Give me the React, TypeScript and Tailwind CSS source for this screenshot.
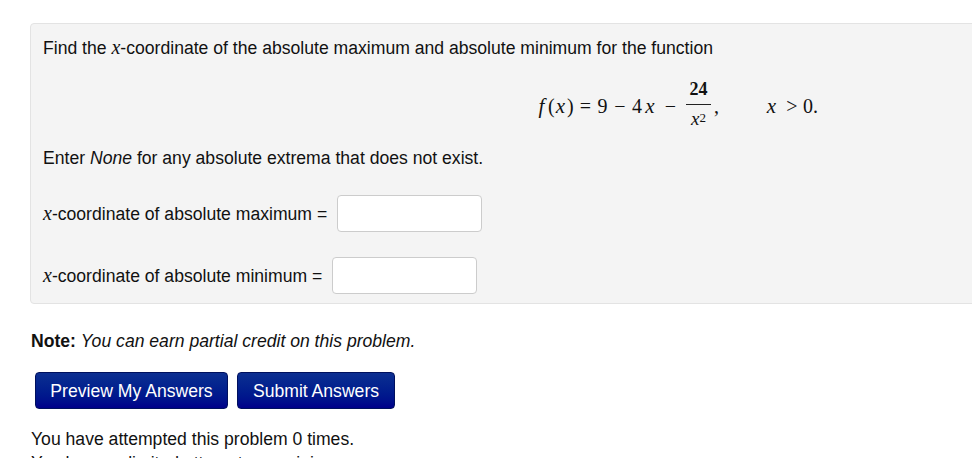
import React from "react";

const serif = { fontFamily: '"Liberation Serif", "DejaVu Serif", serif' };

function X() {
  return (
    <span className="italic text-[20px]" style={serif}>
      x
    </span>
  );
}

export default function App() {
  return (
    <div
      className="w-full overflow-hidden bg-white text-[17.6px] leading-[22px] text-[#111]"
      style={{ fontFamily: '"Liberation Sans", Arial, sans-serif', height: 458 }}
    >
      <div className="pt-[23px] pl-[30px]">
        <div className="w-[1100px] h-[281px] rounded-[4px] border border-[#e3e3e3] bg-[#f4f4f4] pl-[12px] pt-[12px]">
          <div>
            Find the <X />-coordinate of the absolute maximum and absolute minimum for the function
          </div>
          <div className="mt-[17px] pl-[492px] h-[60px] flex items-center text-[20px] leading-none" style={serif}>
            <span className="w-[13px] italic text-center text-[21px]">f</span>
            <span className="w-[6px]">(</span>
            <span className="w-[13px] italic text-center text-[21px]">x</span>
            <span className="w-[7px]">)</span>
            <span className="w-[23px] text-center">=</span>
            <span className="w-[11px] text-center">9</span>
            <span className="w-[24px] text-center">−</span>
            <span className="w-[10px] text-center">4</span>
            <span className="w-[16px] italic text-center text-[21px]">x</span>
            <span className="w-[25px] text-center">−</span>
            <span className="w-[31px] flex flex-col items-center -translate-y-[2px]">
              <span className="block h-[24px] pb-[6px] font-bold text-[18px] leading-[18px]">24</span>
              <span className="block h-[1px] w-[25px] bg-[#222]"></span>
              <span className="block h-[24px] pt-[5px] text-[18px] leading-[18px]">
                <span className="italic text-[19px]">x</span>
                <sup className="text-[13px] relative top-[-3px]">2</sup>
              </span>
            </span>
            <span className="w-[7px]">,</span>
            <span className="ml-[44px] w-[13px] italic text-center text-[21px]">x</span>
            <span className="ml-[4px] w-[20px] text-center">&gt;</span>
            <span className="ml-[1px]">0.</span>
          </div>
          <div className="mt-[11px]">
            Enter <i>None</i> for any absolute extrema that does not exist.
          </div>
          <div className="mt-[26px] flex items-center h-[37px]">
            <span>
              <X />-coordinate of absolute maximum =
            </span>
            <input
              className="ml-[10px] w-[145px] h-[37px] rounded-[4px] border border-[#cccccc] bg-white"
              type="text"
            />
          </div>
          <div className="mt-[25px] flex items-center h-[37px]">
            <span>
              <X />-coordinate of absolute minimum =
            </span>
            <input
              className="ml-[10px] w-[145px] h-[37px] rounded-[4px] border border-[#cccccc] bg-white"
              type="text"
            />
          </div>
        </div>
        <div className="pl-[1px] mt-[26px]">
          <b>Note:</b> <i>You can earn partial credit on this problem.</i>
        </div>
        <div className="mt-[20px] ml-[5px] flex gap-[9px]">
          <button className="w-[193px] h-[37px] rounded-[4px] border border-[#00105e] bg-gradient-to-b from-[#0d2f91] to-[#00008a] text-white text-[17.6px]">
            Preview My Answers
          </button>
          <button className="w-[158px] h-[37px] rounded-[4px] border border-[#00105e] bg-gradient-to-b from-[#0d2f91] to-[#00008a] text-white text-[17.6px]">
            Submit Answers
          </button>
        </div>
        <div className="pl-[1px] mt-[19px]">You have attempted this problem 0 times.</div>
        <div className="pl-[1px] mt-[2px]">You have unlimited attempts remaining.</div>
      </div>
    </div>
  );
}
